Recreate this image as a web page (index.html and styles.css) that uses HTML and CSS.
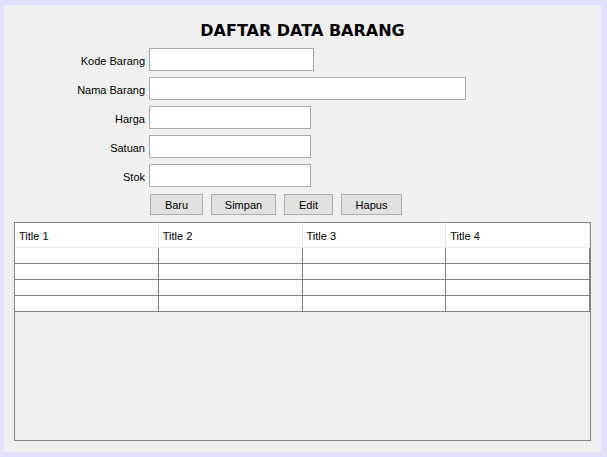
FILE: index.html
```html
<!DOCTYPE html>
<html lang="id">
<head>
<meta charset="utf-8">
<title>Daftar Data Barang</title>
<link rel="stylesheet" href="styles.css">
</head>
<body>
<div class="window">
  <h1 class="title">DAFTAR DATA BARANG</h1>
  <form class="form">
    <label class="label" for="kode">Kode Barang</label>
    <input class="field field-kode" id="kode" type="text">
    <label class="label" for="nama">Nama Barang</label>
    <input class="field field-nama" id="nama" type="text">
    <label class="label" for="harga">Harga</label>
    <input class="field field-short" id="harga" type="text">
    <label class="label" for="satuan">Satuan</label>
    <input class="field field-short" id="satuan" type="text">
    <label class="label" for="stok">Stok</label>
    <input class="field field-short" id="stok" type="text">
    <div class="buttons">
      <button type="button" class="btn btn-baru">Baru</button>
      <button type="button" class="btn btn-simpan">Simpan</button>
      <button type="button" class="btn btn-edit">Edit</button>
      <button type="button" class="btn btn-hapus">Hapus</button>
    </div>
  </form>
  <div class="table-box">
    <table class="grid">
      <thead>
        <tr><th>Title 1</th><th>Title 2</th><th>Title 3</th><th>Title 4</th></tr>
      </thead>
      <tbody>
        <tr><td></td><td></td><td></td><td></td></tr>
        <tr><td></td><td></td><td></td><td></td></tr>
        <tr><td></td><td></td><td></td><td></td></tr>
        <tr><td></td><td></td><td></td><td></td></tr>
      </tbody>
    </table>
  </div>
</div>
</body>
</html>
```

FILE: styles.css
```css
* { box-sizing: border-box; }

html, body {
  margin: 0;
  padding: 0;
  height: 100%;
}

body {
  background: #e1e1fb;
  font-family: "Liberation Sans", Arial, sans-serif;
  font-size: 11px;
  color: #000;
  padding: 5px 6px 5px 4px;
}

.window {
  height: 447px;
  background: #f0f0f0;
  display: flex;
  flex-direction: column;
  padding: 16px 10px 11px 10px;
}

.title {
  margin: 0;
  font-family: "DejaVu Sans", Verdana, sans-serif;
  font-weight: bold;
  font-size: 16px;
  line-height: 20px;
  text-align: center;
}

.form {
  margin: 7px 0 0 -10px;
  display: grid;
  grid-template-columns: 141px auto;
  column-gap: 4px;
  row-gap: 6px;
  align-items: center;
  justify-items: start;
}

.label {
  justify-self: end;
  white-space: nowrap;
  padding-top: 3px;
}

.field {
  height: 23px;
  border: 1px solid #ababab;
  background: #fff;
  margin: 0;
  padding: 0 3px;
  font: inherit;
}

.field-kode { width: 165px; }
.field-nama { width: 317px; }
.field-short { width: 162px; }

.buttons {
  grid-column: 2;
  display: flex;
  gap: 8px;
  margin: 1px 0 0 1px;
}

.btn {
  height: 21px;
  margin: 0;
  padding: 0;
  border: 1px solid #adadad;
  background: #e1e1e1;
  font: inherit;
  color: #000;
}

.btn-baru { width: 53px; }
.btn-simpan { width: 65px; }
.btn-edit { width: 49px; }
.btn-hapus { width: 61px; }

.table-box {
  margin-top: 7px;
  flex: 1;
  border: 1px solid #828790;
  background: #f0f0f0;
}

.grid {
  width: 100%;
  table-layout: fixed;
  border-collapse: separate;
  border-spacing: 0;
}

.grid th {
  height: 25px;
  padding: 2px 0 0 4px;
  text-align: left;
  font-weight: normal;
  background: #fff;
  border-right: 1px solid #e6e6e6;
  border-bottom: 1px solid #ececec;
}

.grid td {
  height: 16px;
  padding: 0;
  background: #fff;
  border-right: 1px solid #808080;
  border-bottom: 1px solid #808080;
}
```
